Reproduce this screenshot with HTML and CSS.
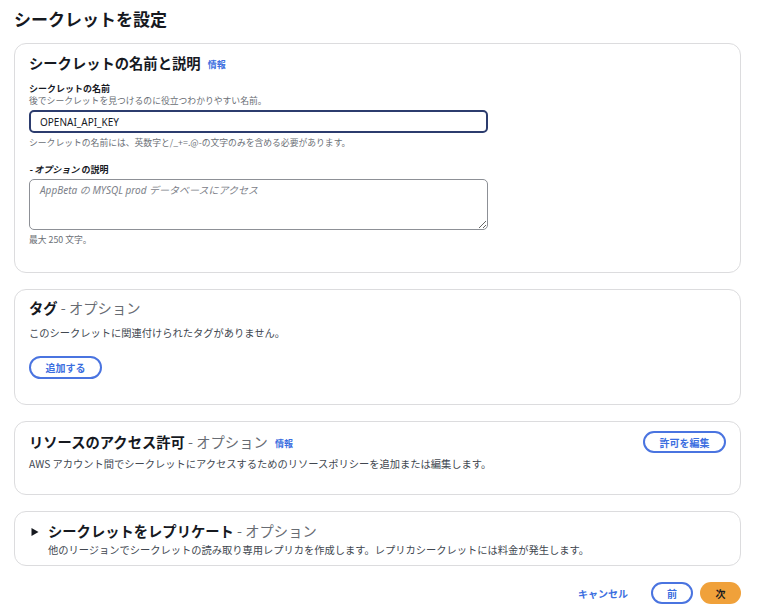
FILE: index.html
```html
<!DOCTYPE html>
<html>
    <head>
        <meta charset="utf-8">
        <title>シークレットを設定</title>
        <link rel="stylesheet" href="styles.css">
    </head>
    <body>
        <div class="page">
            <h1 class="page-title">シークレットを設定</h1>

            <!-- 名前と説明 -->
            <div class="card card-name">
                <h2 class="card-title">シークレットの名前と説明 <a class="info-link" href="#">情報</a></h2>
                <div class="field-label">シークレットの名前</div>
                <div class="field-hint">後でシークレットを見つけるのに役立つわかりやすい名前。</div>
                <input class="text-input" type="text" value="OPENAI_API_KEY">
                <div class="field-hint hint-after">シークレットの名前には、英数字と/_+=.@-の文字のみを含める必要があります。</div>
                <div class="field-label label-desc"><i>- オプション</i> の説明</div>
                <textarea class="text-area" placeholder="AppBeta の MYSQL prod データベースにアクセス"></textarea>
                <div class="field-hint hint-max">最大 250 文字。</div>
            </div>

            <!-- タグ -->
            <div class="card card-tags">
                <h2 class="card-title">タグ <span class="optional">- オプション</span></h2>
                <div class="card-desc">このシークレットに関連付けられたタグがありません。</div>
                <button class="btn btn-outline btn-add">追加する</button>
            </div>

            <!-- リソースのアクセス許可 -->
            <div class="card card-policy">
                <div class="card-head">
                    <h2 class="card-title">リソースのアクセス許可 <span class="optional">- オプション</span> <a class="info-link" href="#">情報</a></h2>
                    <button class="btn btn-outline btn-edit">許可を編集</button>
                </div>
                <div class="card-desc desc-policy">AWS アカウント間でシークレットにアクセスするためのリソースポリシーを追加または編集します。</div>
            </div>

            <!-- レプリケート -->
            <div class="card card-replica">
                <div class="expander">
                    <svg class="caret" width="8" height="10" viewBox="0 0 8 10"><polygon points="0.5,1 7.5,5 0.5,9" fill="#16191f"/></svg>
                    <div>
                        <h2 class="card-title">シークレットをレプリケート <span class="optional">- オプション</span></h2>
                        <div class="card-desc desc-replica">他のリージョンでシークレットの読み取り専用レプリカを作成します。レプリカシークレットには料金が発生します。</div>
                    </div>
                </div>
            </div>

            <!-- フッター -->
            <div class="footer">
                <a class="link-cancel" href="#">キャンセル</a>
                <button class="btn btn-outline btn-prev">前</button>
                <button class="btn btn-primary btn-next">次</button>
            </div>
        </div>
    </body>
</html>
```

FILE: styles.css
```css
body {
    margin: 0;
    background: #ffffff;
    color: #16191f;
    font-family: "Noto Sans CJK JP", "Noto Sans", sans-serif;
}
.page {
    width: 727px;
    padding: 7px 0 0 14px;
}
.page-title {
    margin: 0 0 12px 0;
    font-size: 17px;
    line-height: 24px;
    font-weight: 700;
    color: #16191f;
}
.card {
    border: 1px solid #dcdcde;
    border-radius: 12px;
    margin-bottom: 16px;
    padding: 0 14px;
}
.card-title {
    margin: 0;
    font-size: 14.3px;
    line-height: 20px;
    font-weight: 700;
    color: #16191f;
}
.optional {
    font-weight: 400;
    color: #686c73;
}
.info-link {
    font-size: 9px;
    line-height: 1;
    font-weight: 700;
    color: #3b6ee0;
    text-decoration: none;
    margin-left: 4px;
    vertical-align: 1px;
}
.card-name {
    padding-top: 9px;
    padding-bottom: 27px;
}
.field-label {
    margin-top: 10px;
    font-size: 9px;
    line-height: 12px;
    font-weight: 700;
    color: #16191f;
}
.label-desc {
    margin-top: 16px;
}
.field-hint {
    font-size: 8.8px;
    line-height: 11px;
    color: #6b6f76;
}
.hint-after {
    margin-top: 4px;
}
.hint-max {
    margin-top: 4px;
}
.text-input {
    display: block;
    box-sizing: border-box;
    width: 459px;
    height: 23px;
    margin: 4px 0 0 0;
    padding: 0 9px;
    border: 2px solid #2c3c6e;
    border-radius: 5px;
    font-family: "Noto Sans", "Noto Sans CJK JP", sans-serif;
    font-size: 10px;
    color: #16191f;
    outline: none;
}
.text-area {
    display: block;
    box-sizing: border-box;
    width: 459px;
    height: 51px;
    margin: 3px 0 0 0;
    padding: 3px 10px;
    border: 1px solid #8d9096;
    border-radius: 5px;
    font-family: "Noto Sans", "Noto Sans CJK JP", sans-serif;
    font-size: 10px;
    line-height: 14px;
    outline: none;
}
.text-area::placeholder {
    font-style: italic;
    color: #7d8189;
}
.card-desc {
    font-size: 10.25px;
    line-height: 14px;
    color: #414750;
}
.card-tags {
    padding-top: 8px;
    padding-bottom: 25px;
}
.card-tags .card-desc {
    margin-top: 8px;
}
.btn {
    box-sizing: border-box;
    height: 23px;
    border-radius: 12px;
    font-family: "Noto Sans CJK JP", sans-serif;
    font-size: 10px;
    font-weight: 700;
    cursor: pointer;
    padding: 0;
}
.btn-outline {
    background: #ffffff;
    border: 2px solid #4a74e0;
    color: #3b6ee0;
}
.btn-add {
    display: block;
    width: 73px;
    margin-top: 16px;
}
.card-policy {
    padding-top: 9px;
    padding-bottom: 23px;
}
.card-head {
    display: flex;
    justify-content: space-between;
    align-items: center;
    height: 22px;
}
.btn-edit {
    width: 83px;
    height: 22px;
}
.desc-policy {
    margin-top: 4px;
}
.card-replica {
    padding-top: 9px;
    padding-bottom: 8px;
}
.expander {
    display: flex;
    align-items: flex-start;
}
.caret {
    margin: 6px 9px 0 2px;
}
.desc-replica {
    margin-top: 2px;
}
.footer {
    display: flex;
    justify-content: flex-end;
    align-items: center;
    gap: 7px;
}
.link-cancel {
    font-size: 10px;
    font-weight: 700;
    color: #3b6ee0;
    text-decoration: none;
    margin-right: 16px;
}
.btn-prev {
    width: 42px;
    height: 22px;
}
.btn-primary {
    background: #f0a13a;
    border: none;
    color: #16191f;
}
.btn-next {
    width: 41px;
    height: 22px;
}
```
